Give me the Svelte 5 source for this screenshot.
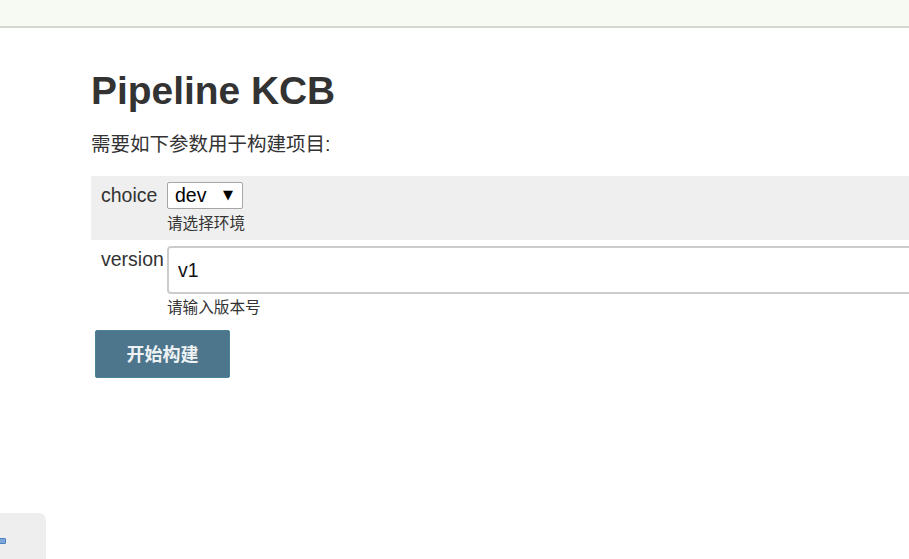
<script>
  let version = $state('v1');
</script>

<div class="page">
  <header class="topbar"></header>
  <main class="main">
    <h1>Pipeline KCB</h1>
    <p class="intro">需要如下参数用于构建项目:</p>
    <form class="form" onsubmit={(e) => e.preventDefault()}>
      <div class="row shaded">
        <span class="label">choice</span>
        <div class="field">
          <div class="select">
            <span>dev</span>
            <span class="arrow">▼</span>
          </div>
          <div class="desc">请选择环境</div>
        </div>
      </div>
      <div class="row second">
        <label class="label" for="version">version</label>
        <div class="field">
          <input id="version" class="input" bind:value={version} />
          <div class="desc">请输入版本号</div>
        </div>
      </div>
      <button class="build" type="submit">开始构建</button>
    </form>
  </main>
  <aside class="widget">
    <span class="chip"></span>
  </aside>
</div>

<style>
  :global(html), :global(body) {
    margin: 0;
    height: 100%;
    overflow: hidden;
    background: #fff;
  }
  .page {
    position: relative;
    height: 559px;
    overflow: hidden;
    font-family: "Liberation Sans", "Noto Sans CJK SC", sans-serif;
    color: #333;
  }
  .topbar {
    height: 26px;
    background: #f7f9f3;
    border-bottom: 2px solid #d3d7cf;
  }
  .main {
    padding: 0 0 0 91px;
  }
  h1 {
    margin: 0;
    padding-top: 40px;
    font-size: 38.9px;
    line-height: 46px;
    font-weight: 700;
    color: #333;
  }
  .intro {
    margin: 0;
    padding-top: 15px;
    font-size: 19.5px;
    line-height: 30px;
    color: #333;
  }
  .form {
    margin-top: 17px;
    width: 1000px;
  }
  .row {
    display: flex;
    align-items: flex-start;
    padding-left: 10px;
  }
  .shaded {
    height: 64px;
    background: #efefef;
    padding-top: 6px;
    box-sizing: border-box;
  }
  .second {
    height: 90px;
    padding-top: 6px;
    box-sizing: border-box;
  }
  .label {
    width: 66px;
    flex: none;
    font-size: 19.5px;
    line-height: 26px;
    color: #333;
  }
  .field {
    flex: 1;
  }
  .select {
    box-sizing: border-box;
    width: 76px;
    height: 27px;
    display: flex;
    align-items: center;
    justify-content: space-between;
    padding: 0 9px 0 7px;
    background: #fff;
    border: 1px solid #a6a6a6;
    border-radius: 2px;
    font-size: 19.5px;
    color: #000;
  }
  .arrow {
    font-size: 13px;
    line-height: 1;
    margin-top: -3px;
    font-family: "DejaVu Sans", sans-serif;
  }
  .input {
    display: block;
    box-sizing: border-box;
    width: 900px;
    height: 48px;
    padding: 0 9px;
    background: #fff;
    border: 2px solid #ccc;
    border-radius: 4px;
    font: 19.5px "Liberation Sans", sans-serif;
    color: #111;
    outline: none;
  }
  .desc {
    font-size: 15.6px;
    line-height: 20px;
    margin-top: 5px;
    color: #333;
  }
  .second .desc {
    margin-top: 4px;
  }
  .build {
    display: block;
    box-sizing: border-box;
    margin-left: 4px;
    width: 135px;
    height: 48px;
    padding: 0 0 2px;
    background: #4d758b;
    border: 1px solid #4a8296;
    border-radius: 2px;
    color: #eef2f4;
    font: 700 18px "Liberation Sans", "Noto Sans CJK SC", sans-serif;
  }
  .widget {
    position: absolute;
    left: 0;
    bottom: 0;
    width: 46px;
    height: 46px;
    background: #eee;
    border-top-right-radius: 7px;
  }
  .chip {
    position: absolute;
    left: -2px;
    top: 25px;
    width: 8px;
    height: 6px;
    background: #7fa6d8;
    border: 1px solid #4f80c0;
    box-sizing: border-box;
    border-radius: 1px;
  }
</style>
